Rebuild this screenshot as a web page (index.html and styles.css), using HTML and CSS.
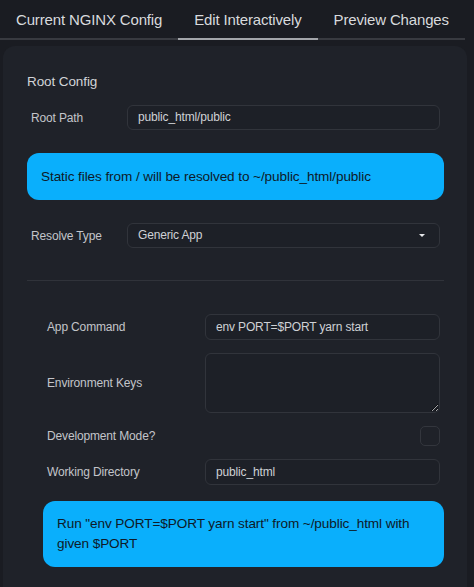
FILE: index.html
```html
<!DOCTYPE html>
<html>
<head>
<meta charset="utf-8">
<link rel="stylesheet" href="styles.css">
</head>
<body>
<div class="tabs">
  <div class="tab">Current NGINX Config</div>
  <div class="tab active">Edit Interactively</div>
  <div class="tab">Preview Changes</div>
</div>
<div class="card">
  <div class="heading">Root Config</div>
  <div class="row">
    <label class="label">Root Path</label>
    <div class="input">public_html/public</div>
  </div>
  <div class="alert alert-one">Static files from / will be resolved to ~/public_html/public</div>
  <div class="row">
    <label class="label">Resolve Type</label>
    <div class="input select">Generic App<span class="caret"></span></div>
  </div>
  <hr class="divider">
  <div class="nested">
    <div class="row wide">
      <label class="label">App Command</label>
      <div class="input">env PORT=$PORT yarn start</div>
    </div>
    <div class="row wide tall">
      <label class="label">Environment Keys</label>
      <textarea class="textarea"></textarea>
    </div>
    <div class="row wide check-row">
      <label class="label">Development Mode?</label>
      <div class="checkbox"></div>
    </div>
    <div class="row wide">
      <label class="label">Working Directory</label>
      <div class="input">public_html</div>
    </div>
    <div class="alert alert-two">Run "env PORT=$PORT yarn start" from ~/public_html with given $PORT</div>
  </div>
</div>
</body>
</html>
```

FILE: styles.css
```css
* { box-sizing: border-box; }
html, body {
  margin: 0;
  padding: 0;
  background: #1a1c22;
  height: 100%;
  overflow: hidden;
}
body {
  font-family: "Liberation Sans", Arial, sans-serif;
  color: #d6d8dc;
}
.tabs {
  display: flex;
  width: 465px;
  height: 40px;
  border-bottom: 2px solid #383a40;
}
.tab {
  padding: 0 16px;
  font-size: 15px;
  letter-spacing: -0.15px;
  line-height: 39px;
  color: #d8dadd;
  white-space: nowrap;
  position: relative;
}
.tab.active::after {
  content: "";
  position: absolute;
  left: 0;
  right: 0;
  bottom: -2px;
  height: 2px;
  background: #a3a5aa;
}
.card {
  margin: 6px 0 0 3px;
  width: 464px;
  height: 600px;
  background: #1f2229;
  border-radius: 12px;
  padding: 26px 23px 0 24px;
}
.heading {
  font-size: 13.5px;
  letter-spacing: -0.1px;
  line-height: 20px;
  color: #d2d4d8;
  margin-bottom: 13px;
}
.row {
  display: flex;
  align-items: center;
  padding: 0 4px;
}
.label {
  width: 96px;
  flex: none;
  font-size: 12px;
  letter-spacing: -0.15px;
  color: #c3c5ca;
}
.input {
  flex: 1;
  height: 25px;
  border: 1px solid #31343b;
  border-radius: 6px;
  background: #1d2027;
  font-size: 12px;
  letter-spacing: -0.15px;
  line-height: 23px;
  padding: 0 10px;
  color: #cfd1d5;
  position: relative;
}
.select .caret {
  position: absolute;
  right: 14px;
  top: 10px;
  width: 0;
  height: 0;
  border-left: 3.5px solid transparent;
  border-right: 3.5px solid transparent;
  border-top: 3.5px solid #e6e7ea;
}
.alert {
  background: #0aaffc;
  color: #0e1a28;
  border-radius: 12px;
  font-size: 13.6px;
  letter-spacing: -0.1px;
  line-height: 20px;
}
.alert-one {
  margin: 23px 0 23px 0;
  height: 47px;
  padding: 14px 14px;
}
.divider {
  border: 0;
  border-top: 1px solid #30333a;
  margin: 32px 0 33px 0;
}
.nested {
  padding-left: 16px;
}
.row.wide .label {
  width: 158px;
}
.row.wide + .row.wide {
  margin-top: 13px;
}
.row.wide .input {
  height: 26px;
  line-height: 24px;
}
.textarea {
  flex: 1;
  height: 60px;
  border: 1px solid #31343b;
  border-radius: 6px;
  background: #1d2027;
  color-scheme: dark;
  margin: 0;
  resize: vertical;
}
.check-row {
  justify-content: space-between;
}
.checkbox {
  width: 20px;
  height: 20px;
  border: 1px solid #33363d;
  border-radius: 5px;
  margin-left: auto;
}
.alert-two {
  margin-top: 16px;
  padding: 13px 14px;
  height: 66px;
}
```
